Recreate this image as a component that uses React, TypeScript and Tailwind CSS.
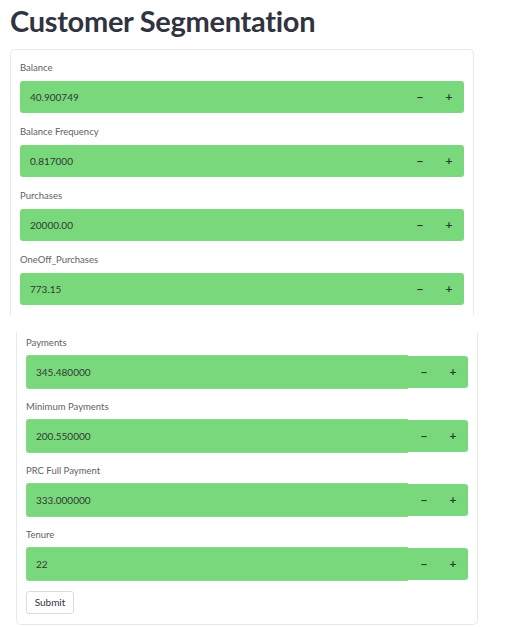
import React, { useState } from 'react';

type Field = { label: string; value: string };

const topFields: Field[] = [
  { label: 'Balance', value: '40.900749' },
  { label: 'Balance Frequency', value: '0.817000' },
  { label: 'Purchases', value: '20000.00' },
  { label: 'OneOff_Purchases', value: '773.15' },
];

const bottomFields: Field[] = [
  { label: 'Payments', value: '345.480000' },
  { label: 'Minimum Payments', value: '200.550000' },
  { label: 'PRC Full Payment', value: '333.000000' },
  { label: 'Tenure', value: '22' },
];

const NumberInput: React.FC<{ field: Field; split?: boolean }> = ({ field, split }) => {
  const [value, setValue] = useState(field.value);
  return (
    <div className="flex flex-col">
      <label className="h-[14px] mb-[6px] text-[9.5px] leading-[14px] text-[#5f6168]">{field.label}</label>
      <div className="flex h-[32px] items-stretch rounded-[3px] bg-[#79d87b]">
        <input
          value={value}
          onChange={(e) => setValue(e.target.value)}
          className={
            split
              ? 'min-w-0 flex-1 -my-px rounded-l-[3px] border border-r-0 border-[#82db84] bg-[#79d87b] px-[9px] text-[10px] text-[#2f3a33] outline-none'
              : 'min-w-0 flex-1 rounded-l-[3px] bg-transparent px-[10px] text-[10px] text-[#2f3a33] outline-none'
          }
        />
        <button className="flex w-[30px] items-center justify-center pl-[2px] text-[12px] font-bold leading-none text-[#2e3a30]">−</button>
        <button className="flex w-[30px] items-center justify-center text-[12px] font-bold leading-none text-[#2e3a30]">+</button>
      </div>
    </div>
  );
};

const App: React.FC = () => {
  return (
    <div className="min-h-[627px] w-[515px] bg-white font-['Lato','Liberation_Sans',sans-serif]">
      <h1 className="pl-[10px] pt-[2px] h-[49px] font-['Lato','Liberation_Sans',sans-serif] text-[29px] font-bold leading-[38px] tracking-[-0.3px] text-[#31333f]">
        Customer Segmentation
      </h1>

      <div className="ml-[10px] h-[266px] w-[464px] overflow-hidden rounded-t-[5px] border border-b-0 border-[#e8e8ea] px-[9px] pt-[11px]">
        <div className="flex flex-col gap-[12px]">
          {topFields.map((f) => (
            <NumberInput key={f.label} field={f} />
          ))}
        </div>
      </div>

      <div className="mt-[17px] ml-[16px] w-[462px] rounded-b-[5px] border border-t-0 border-[#e8e8ea] px-[9px] pt-[4px] pb-[10px]">
        <div className="flex flex-col gap-[12px]">
          {bottomFields.map((f) => (
            <NumberInput key={f.label} field={f} split />
          ))}
        </div>
        <button className="mt-[11px] h-[23px] w-[48px] rounded-[3px] border border-[#dcdcdf] bg-white text-[10px] text-[#31333f]">
          Submit
        </button>
      </div>
    </div>
  );
};

export default App;
